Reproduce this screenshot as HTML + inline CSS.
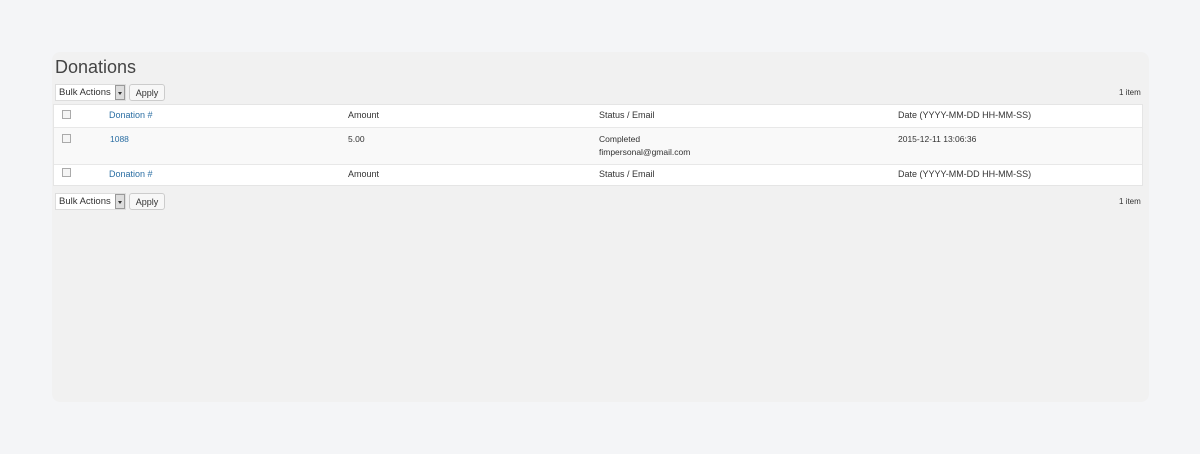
<!DOCTYPE html>
<html><head><style>
body{margin:0;width:1200px;height:454px;background:#f4f5f7;font-family:"Liberation Sans",sans-serif;position:relative;overflow:hidden}
.card{position:absolute;left:52px;top:52px;width:1097px;height:350px;background:#f1f1f1;border-radius:8px}
h1{position:absolute;left:55px;top:57px;margin:0;font-weight:normal;font-size:18px;color:#444}
.sel{position:absolute;width:71px;height:17px;background:#fff;border:1px solid #ddd;font-size:9.5px;color:#333;line-height:16px;box-sizing:border-box;padding-left:3px}
.sel i{position:absolute;right:0;top:0;width:10px;height:15px;background:#ddd;border:1px solid #999;box-sizing:border-box}
.sel i:after{content:"";position:absolute;left:2px;top:6px;border:2px solid transparent;border-top:3px solid #333}
.btn{position:absolute;width:36px;height:17px;background:#f7f7f7;border:1px solid #ccc;border-radius:3px;font-size:9px;color:#333;text-align:center;line-height:17px;box-sizing:border-box}
.tbl{position:absolute;left:53px;top:104px;width:1090px;height:82px;background:#fff;border:1px solid #e5e5e5;box-sizing:border-box}
.row2{position:absolute;left:54px;top:127px;width:1088px;height:36px;background:#f9f9f9;border-top:1px solid #e8e8e8;border-bottom:1px solid #e8e8e8}
.t{position:absolute;font-size:9px;color:#333;white-space:nowrap}
.l{color:#2a6ea3}
.cb{position:absolute;width:7px;height:7px;border:1px solid #aaa;background:#f5f5f5}
</style></head><body>
<div class="card"></div>
<h1>Donations</h1>
<div class="sel" style="left:55px;top:84px">Bulk Actions<i></i></div>
<div class="btn" style="left:129px;top:84px">Apply</div>
<div class="t" style="left:1119px;top:88px;font-size:8px">1 item</div>
<div class="tbl"></div>
<div class="row2"></div>
<div class="cb" style="left:62px;top:110px"></div>
<div class="t l" style="left:109px;top:110px">Donation #</div>
<div class="t" style="left:348px;top:110px">Amount</div>
<div class="t" style="left:599px;top:110px">Status / Email</div>
<div class="t" style="left:898px;top:110px">Date (YYYY-MM-DD HH-MM-SS)</div>
<div class="cb" style="left:62px;top:134px"></div>
<div class="t l" style="left:110px;top:134px;font-size:8.5px">1088</div>
<div class="t" style="left:348px;top:134px;font-size:8.5px">5.00</div>
<div class="t" style="left:599px;top:134px;font-size:8.5px">Completed</div>
<div class="t" style="left:599px;top:147px;font-size:8.5px">fimpersonal@gmail.com</div>
<div class="t" style="left:898px;top:134px;font-size:8.5px">2015-12-11 13:06:36</div>
<div class="cb" style="left:62px;top:168px"></div>
<div class="t l" style="left:109px;top:169px">Donation #</div>
<div class="t" style="left:348px;top:169px">Amount</div>
<div class="t" style="left:599px;top:169px">Status / Email</div>
<div class="t" style="left:898px;top:169px">Date (YYYY-MM-DD HH-MM-SS)</div>
<div class="sel" style="left:55px;top:193px">Bulk Actions<i></i></div>
<div class="btn" style="left:129px;top:193px">Apply</div>
<div class="t" style="left:1119px;top:197px;font-size:8px">1 item</div>
</body></html>
